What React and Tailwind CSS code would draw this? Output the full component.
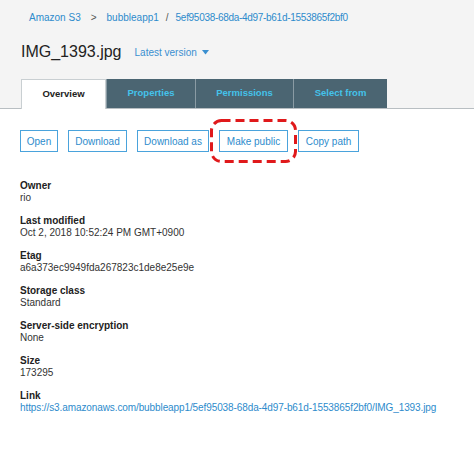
const tabs = ["Overview", "Properties", "Permissions", "Select from"];

const actions = [
  { label: "Open", w: "w-[38px]" },
  { label: "Download", w: "w-[59px]" },
  { label: "Download as", w: "w-[72px]" },
  { label: "Make public", w: "w-[69px]" },
  { label: "Copy path", w: "w-[61px]" },
];

const fields = [
  { label: "Owner", value: "rio" },
  { label: "Last modified", value: "Oct 2, 2018 10:52:24 PM GMT+0900" },
  { label: "Etag", value: "a6a373ec9949fda267823c1de8e25e9e" },
  { label: "Storage class", value: "Standard" },
  { label: "Server-side encryption", value: "None" },
  { label: "Size", value: "173295" },
];

const App = () => {
  return (
    <div className="w-[474px] h-[454px] bg-white font-['Liberation_Sans',Arial,sans-serif] text-[#222] overflow-hidden">
      {/* Header */}
      <div className="bg-[#f4f4f4] border-b border-[#b8bec2]">
        <div className="flex items-center h-[34px] pl-[29px] text-[10px] text-[#2d8bcc]">
          <span>Amazon S3</span>
          <span className="mx-[10px] text-[#555]">&gt;</span>
          <span>bubbleapp1</span>
          <span className="mx-[7px] text-[#555]">/</span>
          <span className="tracking-[-0.3px]">5ef95038-68da-4d97-b61d-1553865f2bf0</span>
        </div>
        <div className="flex items-center h-[36px] pl-[21px]">
          <span className="text-[16px] text-[#222]">IMG_1393.jpg</span>
          <span className="ml-[13px] text-[10px] text-[#3a8fd0] flex items-center">
            Latest version
            <svg className="ml-[5px]" width="7" height="5" viewBox="0 0 7 5">
              <path d="M0 0 L7 0 L3.5 4.5 Z" fill="#3a8fd0" />
            </svg>
          </span>
        </div>
        <div className="flex pl-[21px] pt-[9px]">
          {tabs.map((t, i) => (
            <div
              key={t}
              className={
                i === 0
                  ? "w-[85px] h-[30px] -mb-px bg-white border border-b-0 border-[#c9cfd2] flex items-center justify-center text-[9.5px] font-bold text-[#222]"
                  : "h-[29px] bg-[#4b6572] border-l border-[#8a9ba4] flex items-center justify-center text-[9.5px] font-bold text-[#44c2ea] " +
                    (i === 1 ? "w-[89px]" : i === 2 ? "w-[98px]" : "w-[94px]")
              }
            >
              {t}
            </div>
          ))}
        </div>
      </div>

      {/* Actions */}
      <div className="flex items-center gap-[10px] pl-[20px] pt-[21px]">
        {actions.map((a) => (
          <div key={a.label} className="relative">
            <button
              className={`${a.w} h-[22px] border border-[#4aa3dc] text-[10px] text-[#2d8bcc] bg-white flex items-center justify-center`}
            >
              {a.label}
            </button>
            {a.label === "Make public" && (
              <svg
                className="absolute -left-[9px] -top-[11px]"
                width="87"
                height="44"
                viewBox="0 0 87 44"
              >
                <rect
                  x="1.5"
                  y="1.5"
                  width="84"
                  height="41"
                  rx="10"
                  fill="none"
                  stroke="#e0191b"
                  strokeWidth="3"
                  strokeDasharray="9 5"
                />
              </svg>
            )}
          </div>
        ))}
      </div>

      {/* Details */}
      <div className="pl-[20px] pt-[28px] flex flex-col gap-[11px] text-[10px] leading-[12px]">
        {fields.map((f) => (
          <div key={f.label}>
            <div className="font-bold text-[#222]">{f.label}</div>
            <div className="text-[#333]">{f.value}</div>
          </div>
        ))}
        <div>
          <div className="font-bold text-[#222]">Link</div>
          <div className="text-[#2d8bcc] whitespace-nowrap tracking-[-0.1px]">
            https://s3.amazonaws.com/bubbleapp1/5ef95038-68da-4d97-b61d-1553865f2bf0/IMG_1393.jpg
          </div>
        </div>
      </div>
    </div>
  );
};

export default App;
